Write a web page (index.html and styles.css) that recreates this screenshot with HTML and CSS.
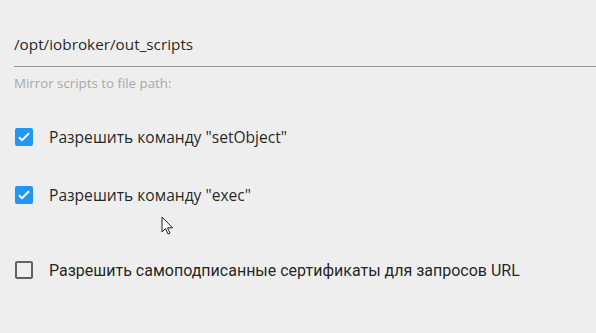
FILE: index.html
```html
<!DOCTYPE html>
<html lang="en">
<head>
  <meta charset="UTF-8">
  <title>Settings</title>
  <link rel="stylesheet" href="styles.css">
</head>
<body>
  <div class="field">
    <div class="value">/opt/iobroker/out_scripts</div>
    <div class="helper">Mirror scripts to file path:</div>
  </div>

  <div class="option first">
    <svg class="box" viewBox="0 0 24 24" width="24" height="24">
      <rect x="3" y="3" width="18" height="18" rx="2" fill="#2196f3"/>
      <path d="M7 12.2l3 3 7-7" fill="none" stroke="#fff" stroke-width="2"/>
    </svg>
    <span>Разрешить команду "setObject"</span>
  </div>

  <div class="option second">
    <svg class="box" viewBox="0 0 24 24" width="24" height="24">
      <rect x="3" y="3" width="18" height="18" rx="2" fill="#2196f3"/>
      <path d="M7 12.2l3 3 7-7" fill="none" stroke="#fff" stroke-width="2"/>
    </svg>
    <span>Разрешить команду "exec"</span>
  </div>

  <div class="option third">
    <svg class="box" viewBox="0 0 24 24" width="24" height="24">
      <rect x="4" y="4" width="16" height="16" rx="1" fill="none" stroke="#616161" stroke-width="2"/>
    </svg>
    <span>Разрешить самоподписанные сертификаты для запросов URL</span>
  </div>

  <svg class="cursor" viewBox="0 0 14 20" width="14" height="20">
    <path d="M1 1v15l3.5-3.5 2.5 5.5 2-1-2.5-5.2h5z" fill="#fff" stroke="#222" stroke-width="1"/>
  </svg>
</body>
</html>
```

FILE: styles.css
```css
body {
  margin: 0;
  background-color: #eeeeee;
  font-family: 'Open Sans', 'Noto Sans', sans-serif;
  color: rgba(0, 0, 0, 0.87);
  position: relative;
  height: 333px;
  overflow: hidden;
}
.field {
  padding-left: 14px;
}
.value {
  font-size: 15.3px;
  line-height: 24px;
  padding: 32px 0 10px;
  border-bottom: 1px solid #949494;
}
.helper {
  margin-top: 8px;
  font-size: 13.3px;
  line-height: 16px;
  color: #a8a8a8;
}
.option {
  display: flex;
  align-items: center;
  height: 24px;
  padding-left: 12px;
  font-size: 15.6px;
}
.option .box {
  margin-right: 13px;
  flex-shrink: 0;
}
.option.first {
  margin-top: 34px;
}
.option.second {
  margin-top: 34px;
}
.option.third {
  margin-top: 51px;
  font-family: Roboto, sans-serif;
  font-size: 16px;
}
.cursor {
  position: absolute;
  left: 161px;
  top: 216px;
}
```
